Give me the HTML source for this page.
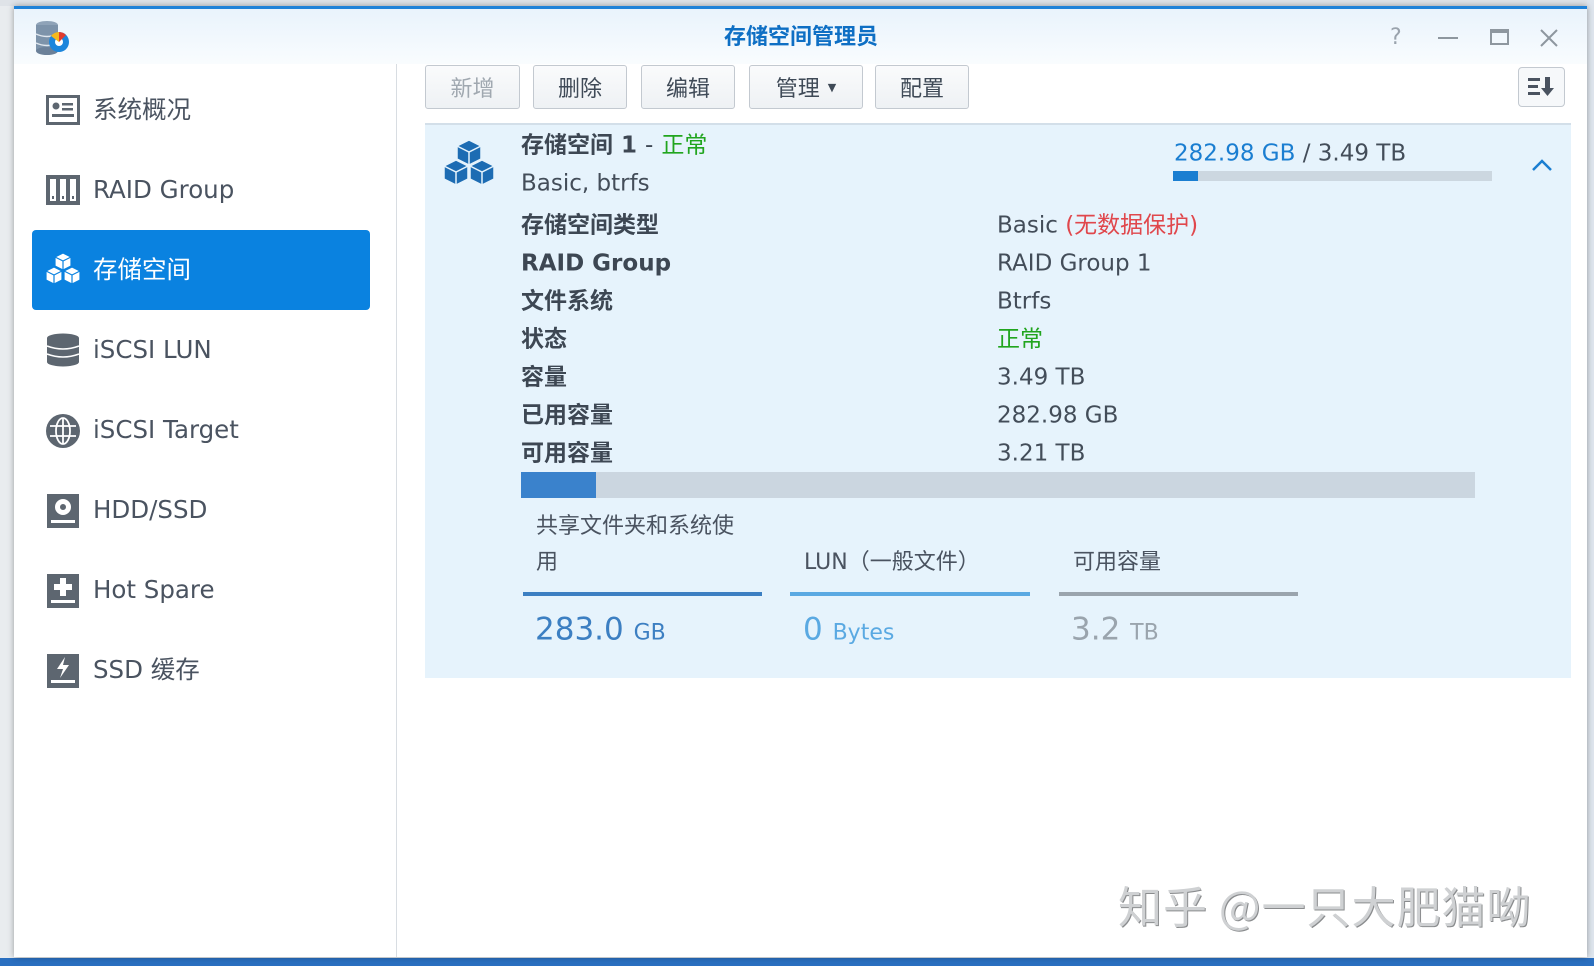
<!DOCTYPE html>
<html><head><meta charset="utf-8"><style>
*{margin:0;padding:0;box-sizing:border-box}
body{width:1594px;height:966px;overflow:hidden;position:relative;background:#e9ecef;font-family:"DejaVu Sans","Noto Sans CJK SC",sans-serif;color:#444f5c}
.a{position:absolute;white-space:nowrap}
.t{line-height:1;transform:translateY(-50%)}
.win{left:14px;top:6px;width:1573px;height:951px;background:#fff;border-top:3px solid #1f82d8;box-shadow:0 0 6px rgba(0,0,0,.35)}
.btn{height:44px;top:65px;border:1px solid #c3c9d0;border-radius:3px;background:linear-gradient(#fafbfc,#eef1f4);font-size:22px;display:flex;align-items:center;justify-content:center;color:#3f4a57}
.lab{left:521px;font-size:23px;font-weight:bold;color:#3d4753}
.val{left:997px;font-size:23px;color:#434d59}
.nav{left:93px;font-size:24.5px;color:#4a5360}
</style></head><body>
<div class="a" style="left:0;top:0;width:1594px;height:6px;background:#dfe3e8"></div>
<div class="a" style="left:1587px;top:0;width:7px;height:966px;background:#dfe6ee"></div>
<div class="a" style="left:0;top:958px;width:1594px;height:8px;background:#2a6fc0"></div>
<div class="a win"></div>
<div class="a" style="left:14px;top:9px;width:1573px;height:55px;background:linear-gradient(#e9f3fc,#f9fcfe)"></div>
<svg class="a" style="left:34px;top:20px" width="40" height="36" viewBox="0 0 40 36"><ellipse cx="13" cy="5" rx="11" ry="4" fill="#8fa3b8"/><rect x="2" y="5" width="22" height="26" fill="#7d93aa"/><ellipse cx="13" cy="31" rx="11" ry="4" fill="#6b8099"/><path d="M2 14q11 5 22 0M2 23q11 5 22 0" stroke="#dfe6ee" stroke-width="1.5" fill="none"/><circle cx="25" cy="22" r="10" fill="#1d86dc"/><circle cx="25" cy="22" r="4" fill="#fff"/><path d="M25 22L17 16A10 10 0 0 1 25 12Z" fill="#f5b81c"/><path d="M25 22L25 12A10 10 0 0 1 32 15Z" fill="#e23b2e"/></svg>
<div class="a t" style="left:0;width:1602px;text-align:center;top:38px;font-size:22px;font-weight:bold;color:#0e6fc4">存储空间管理员</div>
<div class="a t" style="left:1390px;top:38px;font-size:22px;color:#9aa3ad">?</div>
<div class="a" style="left:1438px;top:37px;width:20px;height:2px;background:#8e979f"></div>
<div class="a" style="left:1490px;top:29px;width:19px;height:16px;border:2px solid #8e979f;border-top-width:4px"></div>
<svg class="a" style="left:1539px;top:28px" width="20" height="20"><path d="M2 2L18 18M18 2L2 18" stroke="#8e979f" stroke-width="2"/></svg>
<div class="a" style="left:396px;top:64px;width:1px;height:893px;background:#d8dde2"></div>
<div class="a" style="left:32px;top:230px;width:338px;height:80px;background:#0a82e0;border-radius:4px"></div>
<svg class="a" style="left:45px;top:94px" width="36" height="32"><rect x="1" y="1" width="34" height="30" fill="#5d6670"/><rect x="4" y="4" width="28" height="24" fill="#fff"/><circle cx="11" cy="12" r="3.5" fill="#5d6670"/><rect x="17" y="9" width="11" height="2.5" fill="#5d6670"/><rect x="17" y="14" width="11" height="2.5" fill="#5d6670"/><rect x="7" y="20" width="22" height="3" fill="#5d6670"/></svg>
<div class="a t nav" style="top:110px">系统概况</div>
<svg class="a" style="left:45px;top:174px" width="36" height="32"><rect x="1" y="1" width="34" height="30" fill="#5d6670"/><rect x="5" y="5" width="6" height="22" fill="#fff"/><rect x="15" y="5" width="6" height="22" fill="#fff"/><rect x="25" y="5" width="6" height="22" fill="#fff"/><rect x="7" y="22" width="2" height="3" fill="#5d6670"/><rect x="17" y="22" width="2" height="3" fill="#5d6670"/><rect x="27" y="22" width="2" height="3" fill="#5d6670"/></svg>
<div class="a t nav" style="top:190px">RAID Group</div>
<svg class="a" style="left:44px;top:252px" width="38" height="36" viewBox="0 0 38 36"><g fill="#fff" stroke="#0a82e0" stroke-width="1.2"><path d="M19 1l8 4v9l-8 4-8-4V5z"/><path d="M10 15l8 4v9l-8 4-8-4v-9z"/><path d="M28 15l8 4v9l-8 4-8-4v-9z"/></g><g stroke="#0a82e0" stroke-width="1.2" fill="none"><path d="M11 5l8 4 8-4M19 9v9M2 19l8 4 8-4M10 23v9M20 19l8 4 8-4M28 23v9"/></g></svg>
<div class="a t nav" style="top:270px;color:#fff">存储空间</div>
<svg class="a" style="left:46px;top:333px" width="34" height="34"><ellipse cx="17" cy="5" rx="16" ry="4.5" fill="#5d6670"/><rect x="1" y="5" width="32" height="24" fill="#5d6670"/><ellipse cx="17" cy="29" rx="16" ry="4.5" fill="#5d6670"/><path d="M1 13q16 6 32 0M1 21q16 6 32 0" stroke="#fff" stroke-width="1.5" fill="none"/></svg>
<div class="a t nav" style="top:350px">iSCSI LUN</div>
<svg class="a" style="left:45px;top:413px" width="36" height="36"><circle cx="18" cy="18" r="17" fill="#5d6670"/><g stroke="#fff" stroke-width="1.8" fill="none"><ellipse cx="18" cy="18" rx="7" ry="13"/><path d="M18 5v26M5 13h26M5 23h26"/></g></svg>
<div class="a t nav" style="top:430px">iSCSI Target</div>
<svg class="a" style="left:46px;top:493px" width="34" height="36"><rect x="1" y="1" width="32" height="34" fill="#5d6670"/><circle cx="17" cy="14" r="8" fill="#fff"/><circle cx="17" cy="14" r="3" fill="#5d6670"/><rect x="5" y="27" width="24" height="3" fill="#fff"/></svg>
<div class="a t nav" style="top:510px">HDD/SSD</div>
<svg class="a" style="left:46px;top:573px" width="34" height="36"><rect x="1" y="1" width="32" height="34" fill="#5d6670"/><path d="M14 5h6v6h6v6h-6v6h-6v-6H8v-6h6z" fill="#fff"/><rect x="5" y="27" width="24" height="3" fill="#fff"/></svg>
<div class="a t nav" style="top:590px">Hot Spare</div>
<svg class="a" style="left:46px;top:653px" width="34" height="36"><rect x="1" y="1" width="32" height="34" fill="#5d6670"/><path d="M19 4l-8 12h6l-3 9 9-13h-6z" fill="#fff"/><rect x="5" y="27" width="24" height="3" fill="#fff"/></svg>
<div class="a t nav" style="top:670px">SSD 缓存</div>
<div class="a btn" style="left:425px;width:95px;color:#a0a8b0">新增</div>
<div class="a btn" style="left:533px;width:94px">删除</div>
<div class="a btn" style="left:641px;width:94px">编辑</div>
<div class="a btn" style="left:749px;width:114px">管理<span style="font-size:11px;margin-left:8px">▼</span></div>
<div class="a btn" style="left:875px;width:94px">配置</div>
<div class="a" style="left:1518px;top:67px;width:47px;height:40px;border:1px solid #c3c9d0;border-radius:4px;background:#f6f8fa"></div>
<svg class="a" style="left:1528px;top:76px" width="28" height="22"><g fill="#4a5360"><rect x="0" y="2" width="12" height="3"/><rect x="0" y="9" width="10" height="3"/><rect x="0" y="16" width="12" height="3"/><rect x="17" y="1" width="5" height="12"/><path d="M13 12h13l-6.5 8z"/></g></svg>
<div class="a" style="left:425px;top:123px;width:1146px;height:555px;background:#e6f3fc;border-top:2px solid #d3dfe9"></div>
<svg class="a" style="left:442px;top:139px" width="54" height="52" viewBox="0 0 54 52"><g fill="#1d6cb3" stroke="#e6f3fc" stroke-width="1.5"><path d="M27 1l12 6v13l-12 6-12-6V7z"/><path d="M14 21l12 6v13l-12 6-12-6V27z"/><path d="M40 21l12 6v13l-12 6-12-6V27z"/></g><g stroke="#e6f3fc" stroke-width="1.5" fill="none"><path d="M15 7l12 6 12-6M27 13v13M2 27l12 6 12-6M14 33v13M28 27l12 6 12-6M40 33v13"/></g></svg>
<div class="a t" style="left:521px;top:146px;font-size:23px;font-weight:bold;color:#3d4753">存储空间 1 <span style="font-weight:normal">-</span> <span style="color:#21a51e;font-weight:normal">正常</span></div>
<div class="a t" style="left:521px;top:184px;font-size:23px;color:#434d59">Basic, btrfs</div>
<div class="a t lab" style="top:226px">存储空间类型</div>
<div class="a t lab" style="top:264px">RAID Group</div>
<div class="a t lab" style="top:302px">文件系统</div>
<div class="a t lab" style="top:340px">状态</div>
<div class="a t lab" style="top:378px">容量</div>
<div class="a t lab" style="top:416px">已用容量</div>
<div class="a t lab" style="top:454px">可用容量</div>
<div class="a t val" style="top:226px">Basic <span style="color:#e0474c">(无数据保护)</span></div>
<div class="a t val" style="top:264px">RAID Group 1</div>
<div class="a t val" style="top:302px">Btrfs</div>
<div class="a t val" style="top:340px;color:#21a51e">正常</div>
<div class="a t val" style="top:378px">3.49 TB</div>
<div class="a t val" style="top:416px">282.98 GB</div>
<div class="a t val" style="top:454px">3.21 TB</div>
<div class="a t" style="left:1174px;top:154px;font-size:23px;color:#434d59"><span style="color:#1a7ed1">282.98 GB</span> / 3.49 TB</div>
<div class="a" style="left:1173px;top:171px;width:319px;height:10px;background:#ccd7e0"></div>
<div class="a" style="left:1173px;top:171px;width:25px;height:10px;background:#1a7ed1"></div>
<svg class="a" style="left:1531px;top:158px" width="22" height="14"><path d="M2 12L11 3l9 9" stroke="#1a7ed1" stroke-width="2.5" fill="none"/></svg>
<div class="a" style="left:521px;top:472px;width:954px;height:26px;background:#cbd6e0"></div>
<div class="a" style="left:521px;top:472px;width:75px;height:26px;background:#3a82cc"></div>
<div class="a t" style="left:536px;top:527px;font-size:22px;color:#4a5360">共享文件夹和系统使</div>
<div class="a t" style="left:536px;top:563px;font-size:22px;color:#4a5360">用</div>
<div class="a t" style="left:804px;top:563px;font-size:22px;color:#4a5360">LUN（一般文件）</div>
<div class="a t" style="left:1073px;top:563px;font-size:22px;color:#4a5360">可用容量</div>
<div class="a" style="left:523px;top:592px;width:239px;height:4px;background:#3c7fc2"></div>
<div class="a" style="left:790px;top:592px;width:240px;height:4px;background:#5aa9e2"></div>
<div class="a" style="left:1059px;top:592px;width:239px;height:4px;background:#9aa4ad"></div>
<div class="a t" style="left:535px;top:630px;font-size:31px;color:#3c7fc2">283.0 <span style="font-size:22px">GB</span></div>
<div class="a t" style="left:803px;top:630px;font-size:31px;color:#5aa9e2">0 <span style="font-size:22px">Bytes</span></div>
<div class="a t" style="left:1071px;top:630px;font-size:31px;color:#9aa4ad">3.2 <span style="font-size:22px">TB</span></div>
<div class="a t" style="left:1118px;top:904px;font-size:44px;letter-spacing:1px;color:#cfd1d3;text-shadow:1px 1px 0 #8a8c8e;font-family:'Noto Sans CJK SC',sans-serif">知乎 @一只大肥猫呦</div>
</body></html>
